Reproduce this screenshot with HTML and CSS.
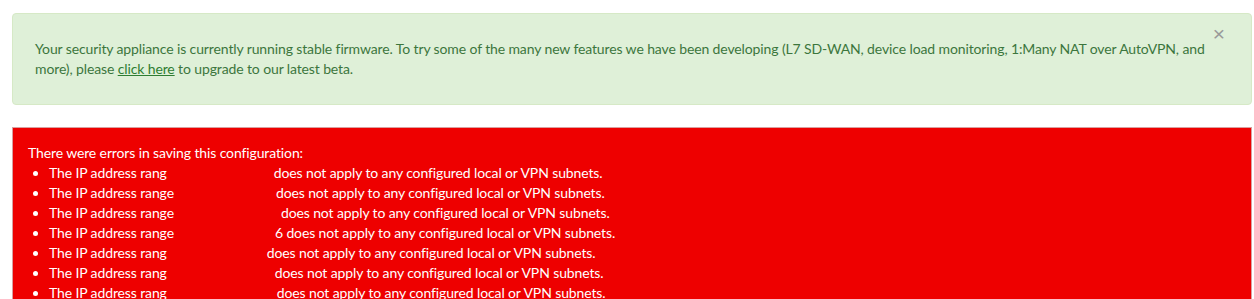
FILE: index.html
```html
<!DOCTYPE html>
<html lang="en">
  <head>
    <meta charset="UTF-8" />
    <meta name="viewport" content="width=device-width, initial-scale=1.0" />
    <title>Security appliance</title>
    <link rel="stylesheet" href="styles.css">
  </head>
  <body>
    <div class="page">
      <div class="alert alert-success">
        <button class="close" type="button">&times;</button>
        Your security appliance is currently running stable firmware. To try some of the many new features we have been developing (L7 SD-WAN, device load monitoring, 1:Many NAT over AutoVPN, and more), please <a href="#">click here</a> to upgrade to our latest beta.
      </div>
      <div class="alert alert-error">
        There were errors in saving this configuration:
        <ul>
          <li>The IP address rang<span class="ip" style="width:107px"></span>does not apply to any configured local or VPN subnets.</li>
          <li>The IP address range<span class="ip" style="width:102px"></span>does not apply to any configured local or VPN subnets.</li>
          <li>The IP address range<span class="ip" style="width:107px"></span>does not apply to any configured local or VPN subnets.</li>
          <li>The IP address range<span class="ip" style="width:101px"></span>6 does not apply to any configured local or VPN subnets.</li>
          <li>The IP address rang<span class="ip" style="width:100px"></span>does not apply to any configured local or VPN subnets.</li>
          <li>The IP address rang<span class="ip" style="width:108px"></span>does not apply to any configured local or VPN subnets.</li>
          <li>The IP address rang<span class="ip" style="width:110px"></span>does not apply to any configured local or VPN subnets.</li>
        </ul>
      </div>
    </div>
  </body>
</html>
```

FILE: styles.css
```css
body {
  margin: 0;
  background: #fff;
  font-family: Lato, "Noto Sans", sans-serif;
  font-size: 14px;
  line-height: 20px;
  letter-spacing: -0.12px;
}
.page {
  padding: 13px 2px 0 12px;
  display: flex;
  flex-direction: column;
  gap: 22px;
}
.alert {
  position: relative;
  border-radius: 4px;
}
.alert-success {
  background: #dff0d8;
  border: 1px solid #d6e9c6;
  color: #3c763d;
  padding: 25px 38px 25px 22px;
}
.alert-success a {
  color: #2e7d32;
  text-decoration: underline;
}
.close {
  position: absolute;
  top: 10px;
  right: 26px;
  background: transparent;
  border: none;
  padding: 0;
  font-family: Arial, "Liberation Sans", sans-serif;
  font-size: 21px;
  line-height: 20px;
  color: #999;
  cursor: pointer;
}
.alert-error {
  background: #ee0000;
  border: 1px solid #d9a0a0;
  border-radius: 0;
  color: #fff;
  padding: 15px 15px 20px 15px;
}
.alert-error ul {
  margin: 0;
  padding-left: 21px;
}
.ip {
  display: inline-block;
}
```
